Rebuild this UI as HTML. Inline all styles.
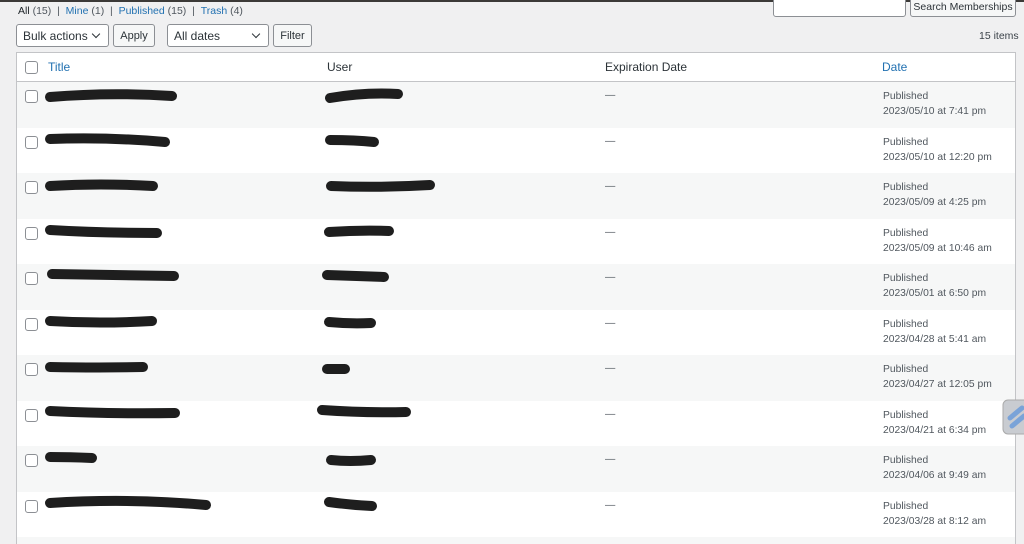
<!DOCTYPE html><html><head><style>
*{box-sizing:border-box;margin:0;padding:0}
html,body{width:1024px;height:544px;overflow:hidden}
body{background:#f0f0f1;font-family:"Liberation Sans",sans-serif;font-size:11px;color:#3c434a;position:relative}
.a{color:#2271b1}
.abs{position:absolute}
.sel{position:absolute;height:23px;border:1px solid #8c8f94;border-radius:3px;background:#fff;font-size:12px;color:#2c3338;padding:4px 6px}
.sel:after{content:"";position:absolute;right:9px;top:6px;width:5px;height:5px;border-right:1.5px solid #2c3338;border-bottom:1.5px solid #2c3338;transform:rotate(45deg)}
.btn{position:absolute;height:23px;border:1px solid #8c8f94;border-radius:3px;background:#f6f7f7;font-size:11px;color:#2c3338;text-align:center;line-height:21px}
.tbl{position:absolute;left:16px;top:52px;width:1000px;height:492px;overflow:hidden;background:#fff;border:1px solid #c3c4c7;border-bottom:none}
.hd{position:absolute;left:0;top:0;width:998px;height:29px;border-bottom:1px solid #c3c4c7;font-size:12px}
.row{position:absolute;left:0;width:998px;height:45.5px}
.cb{position:absolute;left:8px;width:13px;height:13px;border:1px solid #8c8f94;border-radius:3px;background:#fff}
.t{position:absolute;font-size:10.3px;color:#50575e;line-height:15px}
</style></head><body>
<div class="abs" style="left:0;top:0;width:1024px;height:2px;background:#3c3a38"></div>
<div class="abs" style="left:18px;top:5px;font-size:10.5px;color:#50575e"><span style="color:#1d2327">All</span> (15) &nbsp;| &nbsp;<span class="a">Mine</span> (1) &nbsp;| &nbsp;<span class="a">Published</span> (15) &nbsp;| &nbsp;<span class="a">Trash</span> (4)</div>
<div class="abs" style="left:773px;top:-6px;width:133px;height:23px;border:1px solid #8c8f94;border-radius:3px;background:#fff"></div>
<div class="btn" style="left:910px;top:-6px;width:106px;height:23px;line-height:24px;font-size:10.5px">Search Memberships</div>
<div class="sel" style="left:16px;top:24px;width:93px">Bulk actions</div>
<div class="btn" style="left:113px;top:24px;width:42px;line-height:23px">Apply</div>
<div class="sel" style="left:167px;top:24px;width:102px">All dates</div>
<div class="btn" style="left:273px;top:24px;width:39px;line-height:23px">Filter</div>
<div class="abs" style="left:979px;top:30px;color:#3c434a;font-size:10.5px">15 items</div>
<div class="tbl">
<div class="hd"><div class="cb" style="top:8px"></div><span class="abs a" style="left:31px;top:7px">Title</span><span class="abs" style="left:310px;top:7px;color:#2c3338">User</span><span class="abs" style="left:588px;top:7px;color:#2c3338">Expiration Date</span><span class="abs a" style="left:865px;top:7px">Date</span></div>
<div id="rows"></div>
</div>
<script>
var d=["2023/05/10 at 7:41 pm","2023/05/10 at 12:20 pm","2023/05/09 at 4:25 pm","2023/05/09 at 10:46 am","2023/05/01 at 6:50 pm","2023/04/28 at 5:41 am","2023/04/27 at 12:05 pm","2023/04/21 at 6:34 pm","2023/04/06 at 9:49 am","2023/03/28 at 8:12 am",""];
var h="";for(var i=0;i<11;i++){var y=29+i*45.5;h+='<div class="row" style="top:'+y+'px;background:'+(i%2==0?'#f6f7f7':'#fff')+'"><div class="cb" style="top:8px"></div><span class="t" style="left:588px;top:6px">—</span>'+(d[i]?'<span class="t" style="left:866px;top:7px">Published<br>'+d[i]+'</span>':'')+'</div>';}
document.getElementById('rows').innerHTML=h;
</script>
<svg class="abs" style="left:0;top:0" width="1024" height="544"><g stroke="#1e1e1e" stroke-width="10" stroke-linecap="round" fill="none">
<path d="M50 97 Q110 92 172 96"/><path d="M330 98 Q365 92 398 94"/>
<path d="M50 139 Q110 137 165 142"/><path d="M330 140 Q355 140 374 142"/>
<path d="M50 186 Q100 183 153 186"/><path d="M331 186 Q380 188 430 185"/>
<path d="M50 230 Q100 233 157 233"/><path d="M329 232 Q360 230 389 231"/>
<path d="M52 274 Q110 275 174 276"/><path d="M327 275 Q355 276 384 277"/>
<path d="M50 321 Q100 324 152 321"/><path d="M329 322 Q350 324 371 323"/>
<path d="M50 367 Q100 368 143 367"/><path d="M327 369 L345 369"/>
<path d="M50 411 Q110 414 175 413"/><path d="M322 410 Q365 413 406 412"/>
<path d="M50 457 Q70 457 92 458"/><path d="M331 460 Q350 462 371 460"/>
<path d="M50 503 Q130 498 206 505"/><path d="M329 502 Q350 505 372 506"/>
</g>
<rect x="1003" y="400" width="30" height="34" rx="5" fill="#c9ccd1" stroke="#aaa"/>
<path d="M1010 418 L1022 408 M1012 426 L1024 416" stroke="#7aa3d8" stroke-width="5" stroke-linecap="round"/>
</svg>
</body></html>
